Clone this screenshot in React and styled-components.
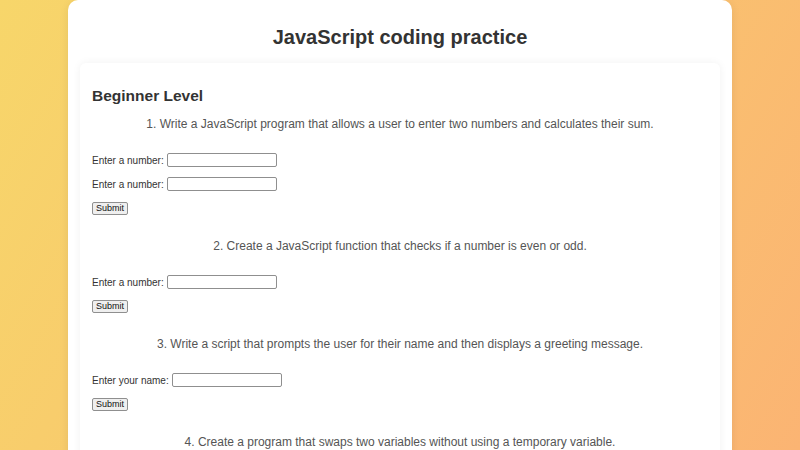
import React from "react";
import styled, { createGlobalStyle } from "styled-components";

const GlobalStyle = createGlobalStyle`
  html, body {
    margin: 0;
    padding: 0;
    height: 100%;
  }
  body {
    font-family: "Liberation Sans", Arial, sans-serif;
    background: linear-gradient(120deg, #f7d66a 0%, #f9c46e 55%, #fbb473 100%);
    background-attachment: fixed;
    overflow: hidden;
  }
`;

const Container = styled.div`
  width: 640px;
  margin: 0 auto;
  background: #fff;
  border-radius: 10px;
  padding: 24px 12px 20px;
  box-shadow: 0 2px 10px rgba(0, 0, 0, 0.08);
`;

const Title = styled.h1`
  margin: 0 0 13px;
  text-align: center;
  font-size: 20px;
  line-height: 26px;
  color: #333;
`;

const Card = styled.section`
  background: #fff;
  border-radius: 6px;
  padding: 23px 12px;
  box-shadow: 0 0 8px rgba(0, 0, 0, 0.06);
`;

const Level = styled.h2`
  margin: 0 0 10px;
  font-size: 15.5px;
  line-height: 20px;
  color: #333;
`;

const Exercise = styled.div`
  display: flex;
  flex-direction: column;
  align-items: flex-start;
  margin-bottom: 23px;
`;

const Question = styled.p`
  align-self: stretch;
  margin: 0 0 20px;
  text-align: center;
  font-size: 12px;
  line-height: 16px;
  color: #555;
`;

const Row = styled.label`
  display: flex;
  align-items: center;
  gap: 3px;
  height: 16px;
  margin-bottom: 8px;
  font-size: 10px;
  color: #333;
`;

const Input = styled.input`
  width: 104px;
  height: 10px;
  padding: 1px 2px;
  border: 1px solid #8f8f8f;
  border-radius: 2px;
  font-size: 10px;
`;

const Button = styled.button`
  margin-top: 2px;
  height: 13px;
  padding: 0 3px;
  font-family: "Liberation Sans", Arial, sans-serif;
  font-size: 9px;
  line-height: 11px;
  color: #111;
  background: #efefef;
  border: 1px solid #8f8f8f;
  border-radius: 2px;
`;

const exercises = [
  {
    q: "1. Write a JavaScript program that allows a user to enter two numbers and calculates their sum.",
    fields: ["Enter a number:", "Enter a number:"],
  },
  {
    q: "2. Create a JavaScript function that checks if a number is even or odd.",
    fields: ["Enter a number:"],
  },
  {
    q: "3. Write a script that prompts the user for their name and then displays a greeting message.",
    fields: ["Enter your name:"],
  },
  {
    q: "4. Create a program that swaps two variables without using a temporary variable.",
    fields: ["Enter first value:", "Enter second value:"],
  },
];

export default function App() {
  return (
    <>
      <GlobalStyle />
      <Container>
        <Title>JavaScript coding practice</Title>
        <Card>
          <Level>Beginner Level</Level>
          {exercises.map((ex, i) => (
            <Exercise key={i}>
              <Question>{ex.q}</Question>
              {ex.fields.map((f, j) => (
                <Row key={j}>
                  {f} <Input type="text" />
                </Row>
              ))}
              <Button>Submit</Button>
            </Exercise>
          ))}
        </Card>
      </Container>
    </>
  );
}
